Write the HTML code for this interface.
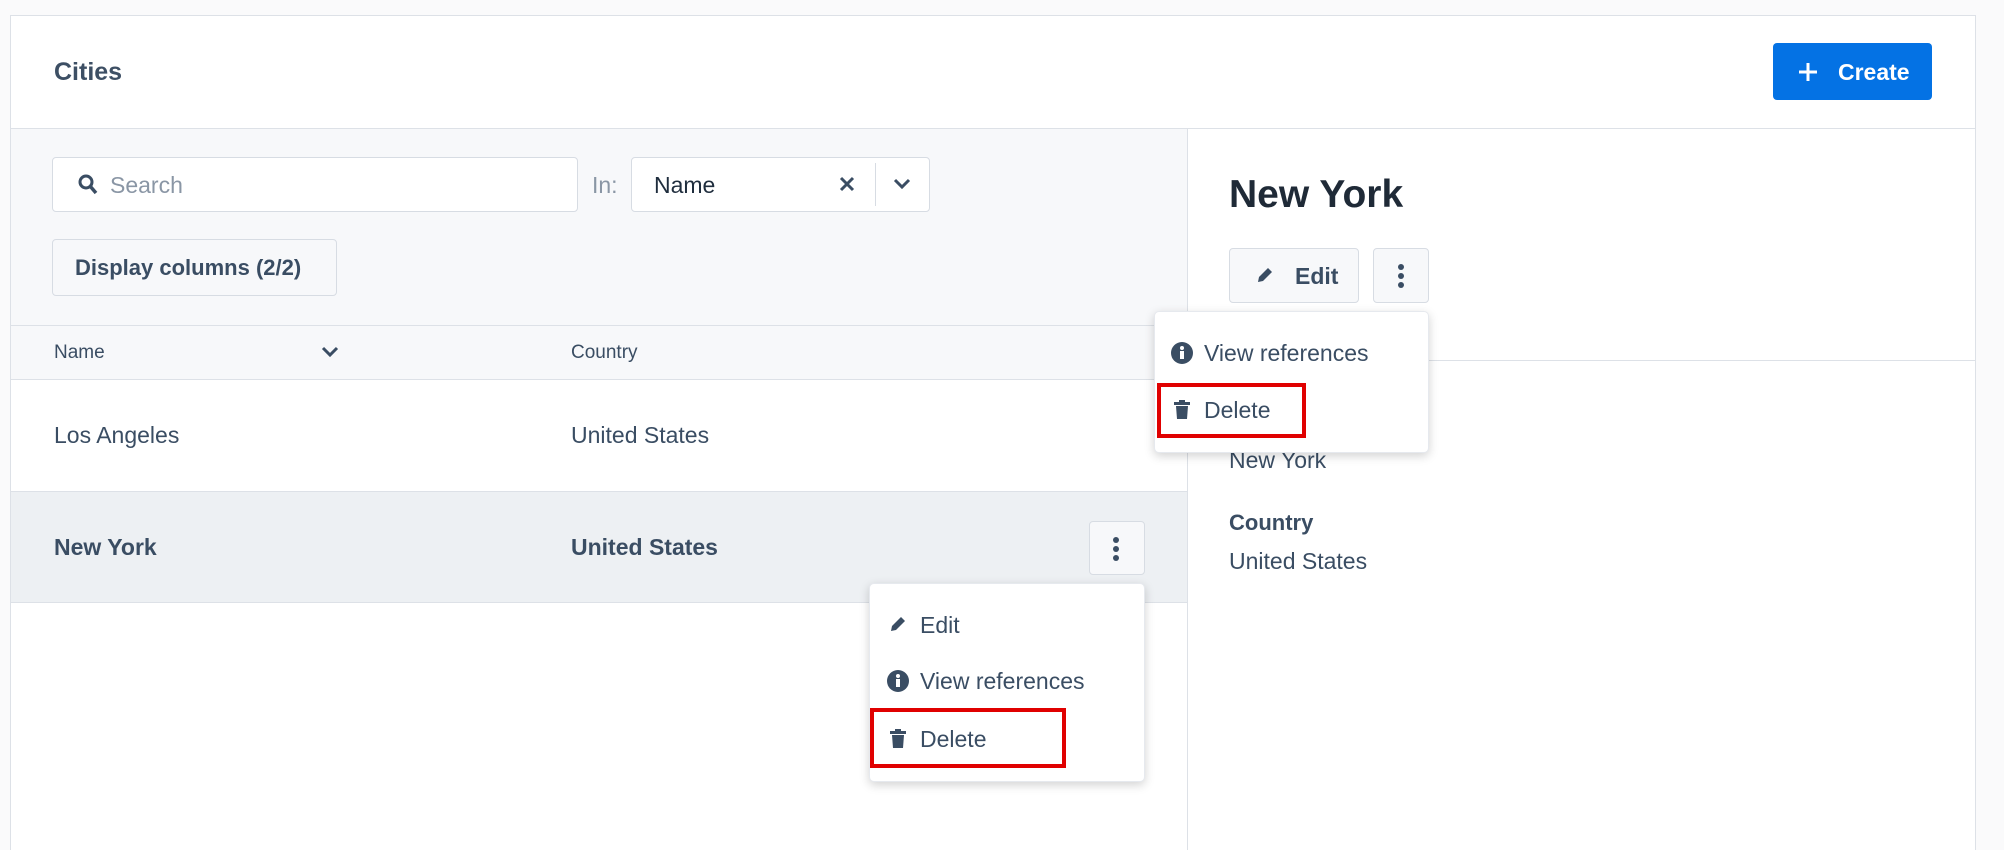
<!DOCTYPE html>
<html><head><meta charset="utf-8"><style>
*{box-sizing:border-box;margin:0;padding:0}
html,body{width:2004px;height:850px;overflow:hidden}
body{background:#fafafb;font-family:"Liberation Sans",sans-serif;color:#3a4d63;position:relative}
.abs{position:absolute}
.card{left:10px;top:15px;width:1966px;height:835px;background:#fff;border:1px solid #dde1e7;border-bottom:none}
.t{position:absolute;white-space:nowrap;line-height:1}
.box{position:absolute;border:1px solid #d7dce3;border-radius:4px}
.menu{position:absolute;background:#fff;border-radius:5px;box-shadow:0 3px 10px rgba(0,0,0,.18);border:1px solid #e6e9ee}
.red{position:absolute;border:4px solid #e00000}
</style></head><body>
<div class="abs card"></div>
<div class="t" style="left:54px;top:60px;font-size:25px;font-weight:bold;color:#3d4f64">Cities</div>
<div class="abs" style="left:1773px;top:43px;width:159px;height:57px;background:#0472e4;border-radius:4px"></div>
<svg class="abs" style="left:1798px;top:62px" width="20" height="20"><path d="M10 1v18M1 10h18" stroke="#fff" stroke-width="3"/></svg>
<div class="t" style="left:1838px;top:61px;font-size:23px;font-weight:bold;color:#fff">Create</div>
<div class="abs" style="left:11px;top:128px;width:1965px;height:1px;background:#dde1e7"></div>
<div class="abs" style="left:11px;top:129px;width:1176px;height:196px;background:#f7f8fa"></div>
<div class="abs" style="left:11px;top:325px;width:1176px;height:55px;background:#f7f8fa;border-top:1px solid #dde1e7;border-bottom:1px solid #dde1e7"></div>
<div class="abs" style="left:11px;top:491px;width:1176px;height:112px;background:#edf0f3;border-top:1px solid #dde1e7;border-bottom:1px solid #dde1e7"></div>
<div class="abs" style="left:1187px;top:129px;width:1px;height:721px;background:#dde1e7"></div>
<div class="abs" style="left:1188px;top:360px;width:788px;height:1px;background:#dde1e7"></div>
<div class="box" style="left:52px;top:157px;width:526px;height:55px;background:#fff"></div>
<svg class="abs" style="left:78px;top:174px" width="20" height="22"><circle cx="8" cy="8" r="6" fill="none" stroke="#3a4d63" stroke-width="3"/><path d="M12 12l6 7" stroke="#3a4d63" stroke-width="3.5"/></svg>
<div class="t" style="left:110px;top:174px;font-size:23px;color:#8a96a5">Search</div>
<div class="t" style="left:592px;top:174px;font-size:23px;color:#8a96a5">In:</div>
<div class="box" style="left:631px;top:157px;width:299px;height:55px;background:#fff"></div>
<div class="t" style="left:654px;top:174px;font-size:23px;color:#1f2d3d">Name</div>
<svg class="abs" style="left:839px;top:176px" width="16" height="16"><path d="M2 2l12 12M14 2L2 14" stroke="#3a4d63" stroke-width="3"/></svg>
<div class="abs" style="left:875px;top:163px;width:1px;height:43px;background:#d7dce3"></div>
<svg class="abs" style="left:893px;top:178px" width="18" height="12"><path d="M2 2l7 7 7-7" fill="none" stroke="#3a4d63" stroke-width="3"/></svg>
<div class="box" style="left:52px;top:239px;width:285px;height:57px;background:#f7f8fa"></div>
<div class="t" style="left:75px;top:257px;font-size:22px;font-weight:bold">Display columns (2/2)</div>
<div class="t" style="left:54px;top:343px;font-size:19px">Name</div>
<svg class="abs" style="left:321px;top:346px" width="18" height="12"><path d="M2 2l7 7 7-7" fill="none" stroke="#3a4d63" stroke-width="3"/></svg>
<div class="t" style="left:571px;top:343px;font-size:19px">Country</div>
<div class="t" style="left:54px;top:424px;font-size:23px">Los Angeles</div>
<div class="t" style="left:571px;top:424px;font-size:23px">United States</div>
<div class="t" style="left:54px;top:536px;font-size:23px;font-weight:bold">New York</div>
<div class="t" style="left:571px;top:536px;font-size:23px;font-weight:bold">United States</div>
<div class="box" style="left:1089px;top:521px;width:56px;height:54px;background:#f7f8fa"></div>
<svg class="abs" style="left:1111px;top:536px" width="10" height="26"><circle cx="5" cy="4" r="3" fill="#3a4d63"/><circle cx="5" cy="13" r="3" fill="#3a4d63"/><circle cx="5" cy="22" r="3" fill="#3a4d63"/></svg>
<div class="menu" style="left:869px;top:583px;width:276px;height:199px"></div>
<svg class="abs" style="left:889px;top:615px" width="18" height="18"><path d="M2 16l1-5 9-9 4 4-9 9z" fill="#3a4d63"/></svg>
<div class="t" style="left:920px;top:614px;font-size:23px">Edit</div>
<svg class="abs" style="left:887px;top:670px" width="22" height="22"><circle cx="11" cy="11" r="11" fill="#3a4d63"/><rect x="9" y="9" width="4" height="8" fill="#fff"/><circle cx="11" cy="6" r="2" fill="#fff"/></svg>
<div class="t" style="left:920px;top:670px;font-size:23px">View references</div>
<svg class="abs" style="left:890px;top:729px" width="16" height="19"><rect x="0" y="2" width="16" height="3" fill="#3a4d63"/><rect x="5" y="0" width="6" height="3" fill="#3a4d63"/><path d="M2 6h12l-1 13H3z" fill="#3a4d63"/></svg>
<div class="t" style="left:920px;top:728px;font-size:23px">Delete</div>
<div class="red" style="left:870px;top:708px;width:196px;height:60px"></div>
<div class="t" style="left:1229px;top:175px;font-size:39px;font-weight:bold;color:#1f2a37">New York</div>
<div class="box" style="left:1229px;top:248px;width:130px;height:55px;background:#f7f8fa"></div>
<svg class="abs" style="left:1256px;top:266px" width="18" height="18"><path d="M2 16l1-5 9-9 4 4-9 9z" fill="#3a4d63"/></svg>
<div class="t" style="left:1295px;top:265px;font-size:23px;font-weight:bold">Edit</div>
<div class="box" style="left:1373px;top:248px;width:56px;height:55px;background:#f7f8fa"></div>
<svg class="abs" style="left:1396px;top:263px" width="10" height="26"><circle cx="5" cy="4" r="3" fill="#3a4d63"/><circle cx="5" cy="13" r="3" fill="#3a4d63"/><circle cx="5" cy="22" r="3" fill="#3a4d63"/></svg>
<div class="t" style="left:1229px;top:449px;font-size:23px">New York</div>
<div class="t" style="left:1229px;top:512px;font-size:22px;font-weight:bold">Country</div>
<div class="t" style="left:1229px;top:550px;font-size:23px">United States</div>
<div class="menu" style="left:1154px;top:311px;width:275px;height:142px"></div>
<svg class="abs" style="left:1171px;top:342px" width="22" height="22"><circle cx="11" cy="11" r="11" fill="#3a4d63"/><rect x="9" y="9" width="4" height="8" fill="#fff"/><circle cx="11" cy="6" r="2" fill="#fff"/></svg>
<div class="t" style="left:1204px;top:342px;font-size:23px">View references</div>
<svg class="abs" style="left:1174px;top:400px" width="16" height="19"><rect x="0" y="2" width="16" height="3" fill="#3a4d63"/><rect x="5" y="0" width="6" height="3" fill="#3a4d63"/><path d="M2 6h12l-1 13H3z" fill="#3a4d63"/></svg>
<div class="t" style="left:1204px;top:399px;font-size:23px">Delete</div>
<div class="red" style="left:1157px;top:383px;width:149px;height:55px"></div>
</body></html>
